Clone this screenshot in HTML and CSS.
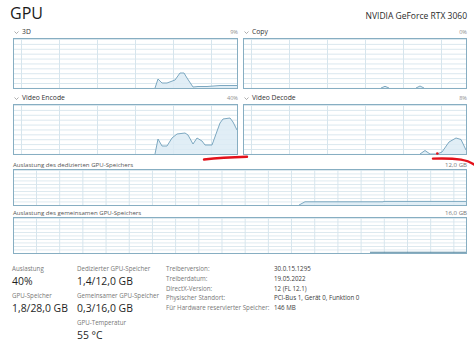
FILE: index.html
```html
<!DOCTYPE html>
<html lang="de">
<head>
<meta charset="utf-8">
<title>GPU</title>
<link rel="stylesheet" href="styles.css">
</head>
<body>
<div class="page">
  <header class="head">
    <h1 class="title">GPU</h1>
    <div class="model">NVIDIA GeForce RTX 3060</div>
  </header>

  <section class="engines">
    <div class="engine">
      <div class="elabel">
        <span class="ename"><svg class="chev" viewBox="0 0 5 3"><path d="M0.5 0.5 L2.5 2.5 L4.5 0.5"/></svg>3D</span>
        <span class="pct">9%</span>
      </div>
      <div class="chart small">
        <svg class="plot" viewBox="0 0 223 49" preserveAspectRatio="none">
          <polygon class="area" points="141,49 144,40 148,44 153,44 161,41 166,34 170,34 173,39 179,48 184,47.5 193,47.5 206,46.5 223,46.5 223,49"/>
          <polyline class="line" points="141,49 144,40 148,44 153,44 161,41 166,34 170,34 173,39 179,48 184,47.5 193,47.5 206,46.5 223,46.5"/>
        </svg>
      </div>
    </div>
    <div class="engine">
      <div class="elabel">
        <span class="ename"><svg class="chev" viewBox="0 0 5 3"><path d="M0.5 0.5 L2.5 2.5 L4.5 0.5"/></svg>Copy</span>
        <span class="pct">0%</span>
      </div>
      <div class="chart small">
        <svg class="plot" viewBox="0 0 222 49" preserveAspectRatio="none">
          <polygon class="area" points="137,49 141,47.3 145,49"/>
          <polyline class="line" points="137,49 141,47.3 145,49"/>
          <polygon class="area" points="172,49 176,47 180,49"/>
          <polyline class="line" points="172,49 176,47 180,49"/>
        </svg>
      </div>
    </div>
    <div class="engine">
      <div class="elabel">
        <span class="ename"><svg class="chev" viewBox="0 0 5 3"><path d="M0.5 0.5 L2.5 2.5 L4.5 0.5"/></svg>Video Encode</span>
        <span class="pct">40%</span>
      </div>
      <div class="chart small">
        <svg class="plot" viewBox="0 0 223 49" preserveAspectRatio="none">
          <polygon class="area" points="141,49 144,34 148,41 153,41 158,33 163,29 171,28 174,30 179,39 183,33 188,36 191,40 198,40 206,18 209,14 216,13 219,17 223,25 223,49"/>
          <polyline class="line" points="141,49 144,34 148,41 153,41 158,33 163,29 171,28 174,30 179,39 183,33 188,36 191,40 198,40 206,18 209,14 216,13 219,17 223,25"/>
        </svg>
      </div>
    </div>
    <div class="engine">
      <div class="elabel">
        <span class="ename"><svg class="chev" viewBox="0 0 5 3"><path d="M0.5 0.5 L2.5 2.5 L4.5 0.5"/></svg>Video Decode</span>
        <span class="pct">8%</span>
      </div>
      <div class="chart small">
        <svg class="plot" viewBox="0 0 222 49" preserveAspectRatio="none">
          <polygon class="area" points="176,49 181,45.5 186,49 193,49 198,47 205,37 212,33 217,34.5 222,45 222,49"/>
          <polyline class="line" points="176,49 181,45.5 186,49 193,49 198,47 205,37 212,33 217,34.5 222,45"/>
        </svg>
      </div>
    </div>
  </section>

  <section class="memory">
    <div class="mlabel">
      <span>Auslastung des dedizierten GPU-Speichers</span>
      <span class="cap">12,0 GB</span>
    </div>
    <div class="chart big">
      <svg class="plot" viewBox="0 0 452 36" preserveAspectRatio="none">
        <polygon class="area" points="285,36 291,32.7 369,32.7 370,32.3 452,32.3 452,36"/>
        <polyline class="line" points="285,36 291,32.7 369,32.7 370,32.3 452,32.3"/>
      </svg>
    </div>
    <div class="mlabel gap">
      <span>Auslastung des gemeinsamen GPU-Speichers</span>
      <span class="cap">16,0 GB</span>
    </div>
    <div class="chart big">
      <svg class="plot" viewBox="0 0 452 36" preserveAspectRatio="none">
        <polyline class="line dark" points="356,35.2 452,35.2"/>
      </svg>
    </div>
  </section>

  <section class="stats">
    <div class="scol">
      <div class="stat"><div class="slabel">Auslastung</div><div class="sval">40%</div></div>
      <div class="stat"><div class="slabel">GPU-Speicher</div><div class="sval">1,8/28,0 GB</div></div>
    </div>
    <div class="scol">
      <div class="stat"><div class="slabel">Dedizierter GPU-Speicher</div><div class="sval">1,4/12,0 GB</div></div>
      <div class="stat"><div class="slabel">Gemeinsamer GPU-Speicher</div><div class="sval">0,3/16,0 GB</div></div>
      <div class="stat"><div class="slabel">GPU-Temperatur</div><div class="sval">55 °C</div></div>
    </div>
    <dl class="props">
      <dt>Treiberversion:</dt><dd>30.0.15.1295</dd>
      <dt>Treiberdatum:</dt><dd>19.05.2022</dd>
      <dt>DirectX-Version:</dt><dd>12 (FL 12.1)</dd>
      <dt>Physischer Standort:</dt><dd>PCI-Bus 1, Gerät 0, Funktion 0</dd>
      <dt>Für Hardware reservierter Speicher:</dt><dd>146 MB</dd>
    </dl>
  </section>

  <svg class="marks" viewBox="0 0 474 357">
    <path d="M204 159.5 Q222 157.5 247 156.8"/>
    <path d="M433 158.6 Q450 158 461 159.6 Q469 161 474 164.5"/>
    <circle cx="437.3" cy="153.5" r="1.3"/>
  </svg>
</div>
</body>
</html>
```

FILE: styles.css
```css
* { box-sizing: border-box; }

html, body {
  margin: 0;
  padding: 0;
  background: #ffffff;
}

body {
  font-family: "Open Sans", "Noto Sans", sans-serif;
  color: #222;
}

.page {
  position: relative;
  width: 474px;
  height: 357px;
  padding: 0 7px 0 13px;
  overflow: hidden;
}

/* header */
.head {
  height: 26px;
  display: flex;
  justify-content: space-between;
  align-items: baseline;
  padding-top: 3px;
}

.title {
  margin: 0 0 0 -3px;
  font-size: 16px;
  line-height: 20px;
  font-weight: 400;
  color: #1a1a1a;
}

.model {
  font-size: 8.5px;
  color: #2a2a2a;
  margin-right: 0;
}

/* engine charts */
.engines {
  display: grid;
  grid-template-columns: 225px 224px;
  column-gap: 5px;
  row-gap: 3px;
}

.elabel {
  height: 12px;
  display: flex;
  justify-content: space-between;
  align-items: center;
  line-height: 12px;
}

.ename {
  display: flex;
  align-items: center;
  font-size: 6.8px;
  color: #333;
  padding-left: 1px;
}

.chev {
  width: 5px;
  height: 3px;
  margin-right: 3px;
  fill: none;
  stroke: #8a8a8a;
  stroke-width: 0.7;
}

.pct {
  font-size: 5.6px;
  color: #8f8f8f;
}

.chart {
  border: 1px solid #87aec2;
  background-color: #fff;
}

.chart.small {
  height: 51px;
  background-image:
    linear-gradient(to right, #d6e5ed 1px, transparent 1px),
    linear-gradient(to bottom, #dae7ee 1px, transparent 1px);
  background-size: 38px 100%, 100% 4.9px;
  background-position: 7px 0, 0 0;
}

.chart.big {
  height: 37px;
  background-image:
    linear-gradient(to right, #d6e5ed 1px, transparent 1px),
    linear-gradient(to bottom, #dae7ee 1px, transparent 1px);
  background-size: 23.2px 100%, 100% 3.5px;
  background-position: 22px 0, 0 0;
}

.plot {
  display: block;
  width: 100%;
  height: 100%;
}

.area {
  fill: #dcebf4;
  fill-opacity: 0.85;
}

.line {
  fill: none;
  stroke: #6f9fba;
  stroke-width: 0.9;
}

.line.dark {
  stroke: #55869f;
  stroke-width: 1.2;
}

/* memory charts */
.memory {
  margin-top: 4px;
}

.mlabel {
  height: 10px;
  display: flex;
  justify-content: space-between;
  align-items: center;
  font-size: 6.1px;
  color: #555;
}

.mlabel.gap {
  margin-top: 1px;
}

.mlabel .cap {
  color: #777;
}

/* stats */
.stats {
  margin-top: 10px;
  margin-left: -1px;
  display: grid;
  grid-template-columns: 65px 89px auto;
}

.stat {
  margin-bottom: 2px;
}

.slabel {
  font-size: 6.2px;
  line-height: 9px;
  color: #777;
}

.sval {
  font-size: 10.4px;
  line-height: 16px;
  color: #1f1f1f;
}

.props {
  margin: 0;
  display: grid;
  grid-template-columns: 108px auto;
  font-size: 6.2px;
  line-height: 9.75px;
  align-content: start;
}

.props dt {
  color: #777;
  white-space: nowrap;
}

.props dd {
  margin: 0;
  color: #3a3a3a;
}

/* hand-drawn annotations */
.marks {
  position: absolute;
  left: 0;
  top: 0;
  width: 474px;
  height: 357px;
  pointer-events: none;
  fill: none;
  stroke: #e3121b;
  stroke-width: 2.4;
  stroke-linecap: round;
}

.marks circle {
  fill: #e3121b;
  stroke: none;
}
```
